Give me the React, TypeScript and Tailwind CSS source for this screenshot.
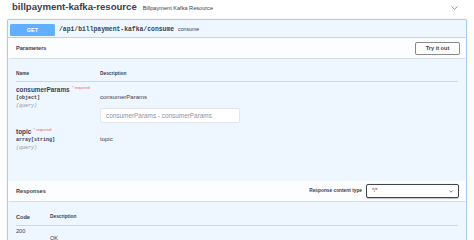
import React from "react";

const mono = "font-['Liberation_Mono',monospace]";

const ParamRow: React.FC<{ name: string; type: string; desc: string; input?: string }> = ({ name, type, desc, input }) => (
    <div className={`flex ${input ? "h-[42px]" : "h-[30px]"}`}>
        <div className="w-[84px] pt-[4px]">
            <div className="flex items-start leading-[8px]">
                <span className="text-[6.4px] font-bold text-[#3b4151]">{name}</span>
                <span className="ml-[2px] text-[4.2px] leading-[4px] text-[#f26666] relative -top-[0.5px]">* required</span>
            </div>
            <div className={`${mono} text-[5px] font-bold leading-[8px] text-[#3b4151]`}>{type}</div>
            <div className={`${mono} text-[5px] italic leading-[8px] text-[#8b8f99]`}>(query)</div>
        </div>
        <div className="pt-[11px]">
            <div className="text-[6px] leading-[8px] text-[#3b4151]">{desc}</div>
            {input && (
                <div className="mt-[7px] w-[140px] h-[15px] flex items-center px-[5px] bg-white border border-[#e3e5ea] rounded-[2px] text-[6.4px] text-[#8f939c]">
                    {input}
                </div>
            )}
        </div>
    </div>
);

export default function App() {
    return (
        <div className="w-[474px] h-[240px] overflow-hidden bg-white font-['Liberation_Sans',Arial,sans-serif] text-[#3b4151]">
            <div className="h-[19px] flex items-start pt-[1px] pl-[12px] pr-[16px]">
                <div className="flex items-baseline leading-[11px]">
                    <span className="text-[9.6px] font-bold">billpayment-kafka-resource</span>
                    <span className="ml-[6px] text-[5.6px] text-[#3b4151]">Billpayment Kafka Resource</span>
                </div>
                <svg className="ml-auto mt-[5px]" width="7" height="4" viewBox="0 0 7 4" fill="none">
                    <path d="M0.5 0.5 L3.5 3.3 L6.5 0.5" stroke="#7b7f88" strokeWidth="0.8" />
                </svg>
            </div>

            <div className="mx-[7px] border border-[#a9cdf3] rounded-[2px] bg-[#eef6ff] shadow-[0_0_1.5px_rgba(0,0,0,0.19)] h-[240px]">
                <div className="flex items-center pt-[4px] pb-[1px] pl-[2px] border-b border-[#b7d7f7]">
                    <div className="w-[45px] h-[12px] flex items-center justify-center rounded-[1.5px] bg-[#61affe] text-white font-bold text-[5.6px]">
                        GET
                    </div>
                    <span className={`${mono} ml-[4px] text-[6.4px] font-bold text-[#3b4151]`}>/api/billpayment-kafka/consume</span>
                    <span className="ml-[4px] text-[5.2px] text-[#3b4151]">consume</span>
                </div>

                <div className="h-[20px] flex items-center justify-between pl-[8px] pr-[6px] bg-[#fcfdff] shadow-[0_0.5px_1px_rgba(0,0,0,0.1)]">
                    <span className="text-[5.6px] font-bold">Parameters</span>
                    <div className="w-[45px] h-[13px] flex items-center justify-center border border-[#8a8a8a] rounded-[2px] bg-white text-[5.6px] font-bold shadow-[0_0_1px_rgba(0,0,0,0.1)]">
                        Try it out
                    </div>
                </div>

                <div className="h-[123px] px-[8px] pt-[9px]">
                    <div className="flex h-[15px] items-center border-b border-[#d3d6dc] text-[4.8px] font-bold">
                        <div className="w-[84px]">Name</div>
                        <div>Description</div>
                    </div>
                    <ParamRow name="consumerParams" type="[object]" desc="consumerParams" input="consumerParams - consumerParams" />
                    <ParamRow name="topic" type="array[string]" desc="topic" />
                </div>

                <div className="h-[20px] flex items-center pl-[8px] pr-[7px] bg-[#fcfdff] shadow-[0_0.5px_1px_rgba(0,0,0,0.1)]">
                    <span className="text-[5.6px] font-bold">Responses</span>
                    <span className="ml-auto text-[4.8px] font-bold">Response content type</span>
                    <div className="ml-[4px] w-[93px] h-[14px] flex items-center justify-between px-[5px] border border-[#41444e] rounded-[2px] bg-white shadow-[0_0.5px_1px_rgba(0,0,0,0.25)]">
                        <span className="text-[5.2px]">*/*</span>
                        <svg width="4" height="3" viewBox="0 0 4 3" fill="none">
                            <path d="M0.4 0.5 L2 2.2 L3.6 0.5" stroke="#3b4151" strokeWidth="0.7" />
                        </svg>
                    </div>
                </div>

                <div className="px-[8px] pt-[8px]">
                    <div className="flex h-[17px] items-center border-b border-[#d3d6dc] font-bold">
                        <div className="w-[34px] text-[5.6px]">Code</div>
                        <div className="text-[4.8px]">Description</div>
                    </div>
                    <div className="flex">
                        <div className="w-[34px] pt-[2px] text-[5.6px] leading-[7px]">200</div>
                        <div className="pt-[9px] text-[5.6px] leading-[7px]">OK</div>
                    </div>
                </div>
            </div>
        </div>
    );
}
